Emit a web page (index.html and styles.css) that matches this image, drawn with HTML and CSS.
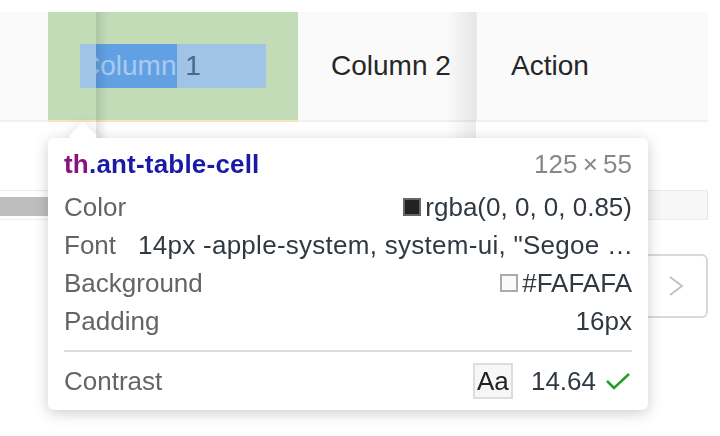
FILE: index.html
```html
<!DOCTYPE html>
<html lang="en">
<head>
  <meta charset="UTF-8">
  <title>Table header inspect</title>
  <link rel="stylesheet" href="styles.css">
</head>
<body>
  <div class="page">
    <div class="table">
      <div class="thead">
        <div class="th th-lead"></div>
        <div class="th th-hl">
          <div class="hl-content"><span class="sel">Column</span> 1</div>
        </div>
        <div class="th th-col2">Column 2</div>
        <div class="th th-action">Action</div>
      </div>
      <div class="tbody"></div>
      <div class="scroll">
        <div class="thumb"></div>
        <div class="track-end"></div>
      </div>
      <div class="shadow-left"></div>
      <div class="shadow-right"></div>
    </div>

    <div class="pager">
      <button class="page-btn">
        <svg width="16" height="22" viewBox="0 0 16 22"><polyline points="2,2 14,11 2,20" fill="none" stroke="#c2c2c2" stroke-width="2"/></svg>
      </button>
    </div>

    <div class="inspect">
      <div class="row title">
        <span><span class="tag">th</span><span class="cls">.ant-table-cell</span></span>
        <span class="dim">125&thinsp;×&thinsp;55</span>
      </div>
      <div class="row">
        <span class="label">Color</span>
        <span class="val"><span class="swatch swatch-dark"></span>rgba(0, 0, 0, 0.85)</span>
      </div>
      <div class="row font-row">
        <span class="label">Font</span>
        <span class="val">14px -apple-system, system-ui, "Segoe …</span>
      </div>
      <div class="row">
        <span class="label">Background</span>
        <span class="val"><span class="swatch swatch-light"></span>#FAFAFA</span>
      </div>
      <div class="row">
        <span class="label">Padding</span>
        <span class="val">16px</span>
      </div>
      <div class="sep"></div>
      <div class="row contrast">
        <span class="label">Contrast</span>
        <span class="val">
          <span class="aa">Aa</span>
          14.64
          <svg class="check" width="28" height="22" viewBox="0 0 28 22"><polyline points="3,11 10,18 25,4" fill="none" stroke="#22a022" stroke-width="2.5"/></svg>
        </span>
      </div>
    </div>
  </div>
</body>
</html>
```

FILE: styles.css
```css
body {
  margin: 0;
  background-color: #ffffff;
  font-family: "Liberation Sans", Arial, sans-serif;
}

.page {
  position: relative;
  width: 720px;
  height: 436px;
  overflow: hidden;
}

.table {
  position: relative;
  width: 708px;
  padding-top: 12px;
}

.thead {
  display: flex;
  height: 110px;
  background-color: #fafafa;
}

.th {
  box-sizing: border-box;
  height: 110px;
  border-bottom: 2px solid #f0f0f0;
  font-size: 28px;
  color: #262626;
  display: flex;
  align-items: center;
  white-space: nowrap;
}

.th-lead {
  width: 48px;
}

.th-hl {
  width: 250px;
  padding: 32px;
  align-items: flex-start;
  background-color: #c3dcb8;
  border-bottom-color: #f3e6b7;
}

.hl-content {
  position: relative;
  width: 100%;
  height: 44px;
  line-height: 44px;
  background-color: #a0c4e6;
  color: #456a8c;
}

/* fixed column hides the start of the text */
.hl-content::before {
  content: "";
  position: absolute;
  left: 0;
  top: 0;
  width: 16px;
  height: 100%;
  background-color: #a0c4e6;
}

.sel {
  display: inline-block;
  height: 44px;
  padding-right: 1px;
  background-color: #62a0e4;
  color: #a8cbef;
}

.th-col2 {
  width: 178px;
  padding-left: 33px;
}

.th-action {
  width: 232px;
  padding-left: 34px;
  border-left: 1px solid #ececec;
}

.tbody {
  height: 68px;
}

.scroll {
  display: flex;
  height: 28px;
  border-top: 1px solid #ebebeb;
  border-bottom: 1px solid #ebebeb;
}

.thumb {
  width: 400px;
  height: 19px;
  margin-top: 6px;
  background-color: #bebebe;
}

.track-end {
  margin-left: auto;
  width: 60px;
  background-color: #f7f7f7;
  border-right: 1px solid #e6e6e6;
}

.shadow-left {
  position: absolute;
  left: 96px;
  top: 12px;
  width: 12px;
  height: 178px;
  background: linear-gradient(to right, rgba(0, 0, 0, 0.1), rgba(0, 0, 0, 0));
}

.shadow-right {
  position: absolute;
  left: 446px;
  top: 12px;
  width: 30px;
  height: 178px;
  background: linear-gradient(to left, rgba(0, 0, 0, 0.08), rgba(0, 0, 0, 0));
}

.pager {
  width: 708px;
  display: flex;
  justify-content: flex-end;
  margin-top: 34px;
}

.page-btn {
  box-sizing: border-box;
  width: 64px;
  height: 64px;
  padding: 0;
  border: 2px solid #d9d9d9;
  border-radius: 6px;
  background-color: #ffffff;
  display: flex;
  align-items: center;
  justify-content: center;
}

.inspect {
  position: absolute;
  left: 48px;
  top: 138px;
  box-sizing: border-box;
  width: 600px;
  height: 272px;
  padding: 7px 16px 10px;
  background-color: #ffffff;
  border-radius: 6px;
  filter: drop-shadow(0 3px 7px rgba(0, 0, 0, 0.2));
  font-size: 26px;
}

.inspect::before {
  content: "";
  position: absolute;
  left: 25px;
  top: -12px;
  width: 20px;
  height: 20px;
  background-color: #ffffff;
  transform: rotate(45deg);
}

.row {
  display: flex;
  align-items: center;
  justify-content: space-between;
  height: 38px;
  color: #303942;
  white-space: nowrap;
}

.label {
  color: #646464;
}

.title {
  margin-bottom: 5px;
  font-weight: bold;
  letter-spacing: 0.2px;
}

.tag {
  color: #881280;
}

.cls {
  color: #1a1aa6;
}

.dim {
  color: #888888;
  font-weight: normal;
  letter-spacing: 0;
}

.val {
  display: flex;
  align-items: center;
  gap: 4px;
}

.font-row {
  justify-content: flex-start;
  gap: 22px;
}

.font-row .val {
  overflow: hidden;
  letter-spacing: 0.27px;
}

.swatch {
  box-sizing: border-box;
  width: 18px;
  height: 18px;
  border: 2px solid #666666;
}

.swatch-dark {
  background-color: #222222;
}

.swatch-light {
  background-color: #fafafa;
  border-color: #aaaaaa;
}

.sep {
  height: 2px;
  margin-top: 10px;
  background-color: #dddddd;
}

.contrast {
  margin-top: 10px;
}

.aa {
  box-sizing: border-box;
  width: 40px;
  height: 36px;
  margin-right: 14px;
  border: 2px solid #dddddd;
  background-color: #f7f7f7;
  color: #222222;
  display: flex;
  align-items: center;
  justify-content: center;
}

.check {
  margin-left: 4px;
}
```
